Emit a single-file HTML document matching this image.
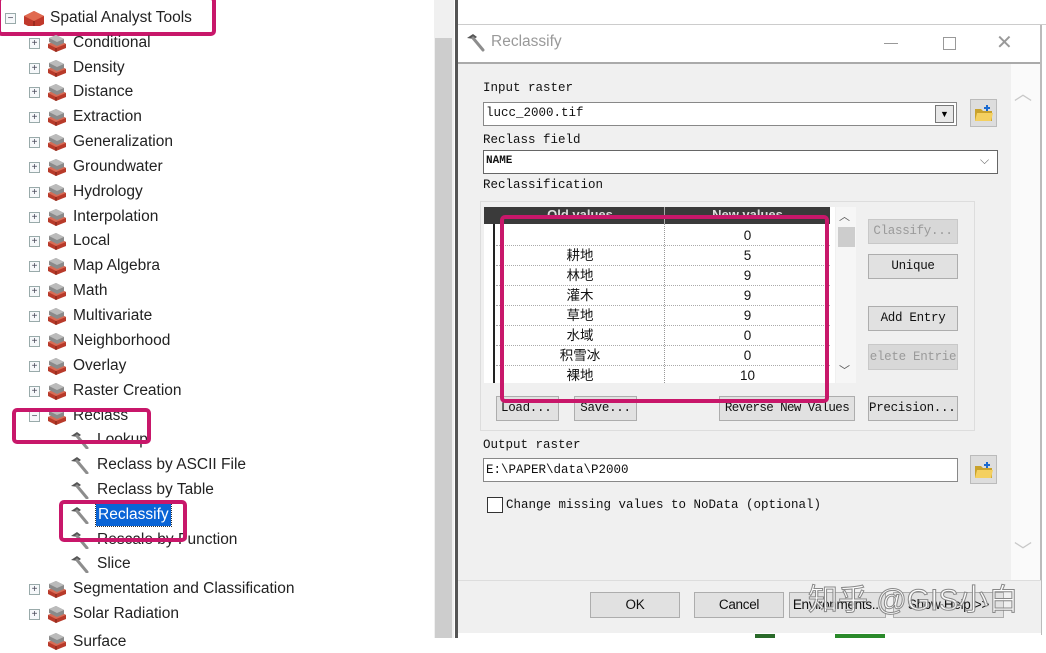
<!DOCTYPE html>
<html><head><meta charset="utf-8"><style>
*{margin:0;padding:0;box-sizing:border-box}
body{width:1046px;height:638px;overflow:hidden;background:#fff;position:relative;font-family:"Liberation Sans","Noto Sans CJK SC",sans-serif}
.a{position:absolute}
.row{position:absolute;height:22px;font-size:15.5px;color:#222;line-height:22px;white-space:nowrap}
.pb{position:absolute;width:11px;height:11px;border:1px solid #9aa;background:#f6f8fa;font-size:10px;line-height:9px;text-align:center;color:#445}
.ts{position:absolute;width:22px;height:18px}
.mono{font-family:"Liberation Mono","Noto Serif CJK SC",monospace;font-size:12.5px;color:#111}
.btn{position:absolute;background:#e1e1e1;border:1px solid #adadad;font-family:"Liberation Mono",monospace;font-size:12.5px;text-align:center;color:#111;overflow:hidden;white-space:nowrap;letter-spacing:-0.3px}
.dis{color:#9a9a9a;background:#d8d8d8;border-color:#c8c8c8}
.mag{position:absolute;border:4px solid #c8176a;border-radius:5px}
.cell{position:absolute;height:20px;line-height:20px;text-align:center;font-size:13.5px;color:#111;border-bottom:1px dotted #aaa}
</style></head><body>
<svg width="0" height="0" style="position:absolute"><defs>
<g id="ts"><path d="M2 10 L12 6 L20 10 L20 14 L10 18 L2 14Z" fill="#b83a2a"/><path d="M2 10 L10 14 L20 10 L12 6Z" fill="#d76b55"/><path d="M3 4 L10 1 L18 5 L18 9 L11 12 L3 8Z" fill="#8a8a8a"/><path d="M3 4 L11 8 L18 5 L10 1Z" fill="#bbb"/><path d="M10 14 L10 18" stroke="#7a2215" stroke-width="1"/></g>
<g id="hm"><path d="M1 5 L7 1 L11 4 L8 6Z" fill="#555"/><path d="M7 5 L17 17" stroke="#8d8d8d" stroke-width="3" stroke-linecap="round"/></g>
</defs></svg>

<div class="a" style="left:434px;top:0;width:20px;height:638px;background:#f0f0f0"></div>
<div class="a" style="left:435px;top:38px;width:17px;height:600px;background:#cdcdcd"></div>
<div class="a" style="left:455px;top:0;width:3px;height:638px;background:#555"></div>

<div class="pb" style="left:5px;top:13px">−</div>
<svg class="ts" style="left:22px;top:8px" width="24" height="22"><path d="M2 8 L12 3 L22 8 L22 16 L12 21 L2 16Z" fill="#c0392b"/><path d="M2 8 L12 13 L22 8 L12 3Z" fill="#e06a50"/><path d="M12 13 L12 21" stroke="#7a1d10"/></svg>
<div class="row" style="left:50px;top:7px">Spatial Analyst Tools</div>
<div class="mag" style="left:-3px;top:-4px;width:219px;height:40px"></div>

<div class="pb" style="left:29px;top:38px">+</div><svg class="ts" style="left:46px;top:34px"><use href="#ts"/></svg><div class="row" style="left:73px;top:32px">Conditional</div>
<div class="pb" style="left:29px;top:63px">+</div><svg class="ts" style="left:46px;top:59px"><use href="#ts"/></svg><div class="row" style="left:73px;top:57px">Density</div>
<div class="pb" style="left:29px;top:87px">+</div><svg class="ts" style="left:46px;top:83px"><use href="#ts"/></svg><div class="row" style="left:73px;top:81px">Distance</div>
<div class="pb" style="left:29px;top:112px">+</div><svg class="ts" style="left:46px;top:108px"><use href="#ts"/></svg><div class="row" style="left:73px;top:106px">Extraction</div>
<div class="pb" style="left:29px;top:137px">+</div><svg class="ts" style="left:46px;top:133px"><use href="#ts"/></svg><div class="row" style="left:73px;top:131px">Generalization</div>
<div class="pb" style="left:29px;top:162px">+</div><svg class="ts" style="left:46px;top:158px"><use href="#ts"/></svg><div class="row" style="left:73px;top:156px">Groundwater</div>
<div class="pb" style="left:29px;top:187px">+</div><svg class="ts" style="left:46px;top:183px"><use href="#ts"/></svg><div class="row" style="left:73px;top:181px">Hydrology</div>
<div class="pb" style="left:29px;top:212px">+</div><svg class="ts" style="left:46px;top:208px"><use href="#ts"/></svg><div class="row" style="left:73px;top:206px">Interpolation</div>
<div class="pb" style="left:29px;top:236px">+</div><svg class="ts" style="left:46px;top:232px"><use href="#ts"/></svg><div class="row" style="left:73px;top:230px">Local</div>
<div class="pb" style="left:29px;top:261px">+</div><svg class="ts" style="left:46px;top:257px"><use href="#ts"/></svg><div class="row" style="left:73px;top:255px">Map Algebra</div>
<div class="pb" style="left:29px;top:286px">+</div><svg class="ts" style="left:46px;top:282px"><use href="#ts"/></svg><div class="row" style="left:73px;top:280px">Math</div>
<div class="pb" style="left:29px;top:311px">+</div><svg class="ts" style="left:46px;top:307px"><use href="#ts"/></svg><div class="row" style="left:73px;top:305px">Multivariate</div>
<div class="pb" style="left:29px;top:336px">+</div><svg class="ts" style="left:46px;top:332px"><use href="#ts"/></svg><div class="row" style="left:73px;top:330px">Neighborhood</div>
<div class="pb" style="left:29px;top:361px">+</div><svg class="ts" style="left:46px;top:357px"><use href="#ts"/></svg><div class="row" style="left:73px;top:355px">Overlay</div>
<div class="pb" style="left:29px;top:386px">+</div><svg class="ts" style="left:46px;top:382px"><use href="#ts"/></svg><div class="row" style="left:73px;top:380px">Raster Creation</div>
<div class="pb" style="left:29px;top:411px">−</div><svg class="ts" style="left:46px;top:407px"><use href="#ts"/></svg><div class="row" style="left:73px;top:405px">Reclass</div>
<svg class="ts" style="left:70px;top:431px"><use href="#hm"/></svg><div class="row" style="left:97px;top:429px">Lookup</div>
<svg class="ts" style="left:70px;top:456px"><use href="#hm"/></svg><div class="row" style="left:97px;top:454px">Reclass by ASCII File</div>
<svg class="ts" style="left:70px;top:481px"><use href="#hm"/></svg><div class="row" style="left:97px;top:479px">Reclass by Table</div>
<svg class="ts" style="left:70px;top:506px"><use href="#hm"/></svg><div class="row" style="left:96px;top:504px;background:#0a64d6;color:#fff;padding:0 2px;outline:1px dotted #333">Reclassify</div>
<svg class="ts" style="left:70px;top:531px"><use href="#hm"/></svg><div class="row" style="left:97px;top:529px">Rescale by Function</div>
<svg class="ts" style="left:70px;top:555px"><use href="#hm"/></svg><div class="row" style="left:97px;top:553px">Slice</div>
<div class="pb" style="left:29px;top:584px">+</div><svg class="ts" style="left:46px;top:580px"><use href="#ts"/></svg><div class="row" style="left:73px;top:578px">Segmentation and Classification</div>
<div class="pb" style="left:29px;top:609px">+</div><svg class="ts" style="left:46px;top:605px"><use href="#ts"/></svg><div class="row" style="left:73px;top:603px">Solar Radiation</div>
<svg class="ts" style="left:46px;top:632px"><use href="#ts"/></svg><div class="row" style="left:73px;top:631px">Surface</div>
<div class="mag" style="left:12px;top:408px;width:139px;height:36px"></div>
<div class="mag" style="left:59px;top:500px;width:128px;height:42px"></div>

<div class="a" style="left:458px;top:24px;width:588px;height:1px;background:#ccc"></div>
<div class="a" style="left:458px;top:25px;width:583px;height:38px;background:#fff"></div>
<svg class="a" style="left:466px;top:33px" width="22" height="20"><use href="#hm"/></svg>
<div class="a" style="left:491px;top:33px;font-size:15.5px;color:#999">Reclassify</div>
<div class="a" style="left:884px;top:43px;width:14px;height:1px;background:#999"></div>
<div class="a" style="left:943px;top:37px;width:13px;height:13px;border:1px solid #999"></div>
<div class="a" style="left:996px;top:33px;font-size:20px;color:#999;line-height:20px">✕</div>
<div class="a" style="left:458px;top:62px;width:583px;height:2px;background:#aaa"></div>
<div class="a" style="left:458px;top:64px;width:553px;height:516px;background:#f0f0f0"></div>
<div class="a" style="left:1011px;top:64px;width:30px;height:516px;background:#fafafa"></div>
<div class="a" style="left:1014px;top:80px;color:#c8c8c8;font-size:18px">︿</div>
<div class="a" style="left:1014px;top:537px;color:#c8c8c8;font-size:18px">﹀</div>
<div class="a" style="left:1040px;top:25px;width:2px;height:610px;background:#bbb"></div>

<div class="a mono" style="left:483px;top:81px">Input raster</div>
<div class="a mono" style="left:483px;top:102px;width:474px;height:24px;background:#fff;border:1px solid #888;padding:3px 2px">lucc_2000.tif</div>
<div class="a" style="left:935px;top:105px;width:19px;height:18px;background:#e8e8e8;border:1px solid #777;font-size:9px;text-align:center;line-height:16px">▼</div>
<div class="a" style="left:970px;top:99px;width:27px;height:28px;background:#ddd;border:1px solid #bbb"></div>
<svg class="a" style="left:974px;top:104px" width="20" height="18"><path d="M1 5h6l2 2h9v10H1Z" fill="#c9a22c"/><path d="M3 9h16l-2 8H1Z" fill="#f4d060"/><path d="M13 1v6M10 4h6" stroke="#1a6ad0" stroke-width="2"/></svg>
<div class="a mono" style="left:483px;top:133px">Reclass field</div>
<div class="a mono" style="left:483px;top:150px;width:515px;height:24px;background:#fff;border:1px solid #666;padding:4px 2px;font-size:11px;font-weight:bold">NAME</div>
<div class="a" style="left:980px;top:153px;color:#666;font-size:12px">⌵</div>
<div class="a mono" style="left:483px;top:178px">Reclassification</div>

<div class="a" style="left:480px;top:201px;width:495px;height:230px;border:1px solid #ddd"></div>
<div class="a" style="left:484px;top:207px;width:351px;height:176px;background:#fff"></div>
<div class="a" style="left:484px;top:207px;width:346px;height:17px;background:#3a3a3a"></div>
<div class="a" style="left:484px;top:224px;width:11px;height:159px;background:#fff;border-right:2px solid #222"></div>
<div class="a" style="left:664px;top:207px;width:1px;height:17px;background:#aaa"></div>
<div class="a" style="left:496px;top:207px;width:168px;font-size:13px;color:#ddd;text-align:center;font-weight:bold">Old values</div>
<div class="a" style="left:665px;top:207px;width:165px;font-size:13px;color:#ddd;text-align:center;font-weight:bold">New values</div>
<div class="a" style="left:836px;top:207px;width:20px;height:176px;background:#f6f6f6"></div>
<div class="a" style="left:838px;top:227px;width:17px;height:20px;background:#cdcdcd"></div>
<div class="a" style="left:839px;top:208px;font-size:11px;color:#555">︿</div>
<div class="a" style="left:839px;top:362px;font-size:11px;color:#555">﹀</div>

<div class="cell" style="left:496px;top:226px;width:168px"></div><div class="cell" style="left:665px;top:226px;width:165px">0</div>
<div class="cell" style="left:496px;top:246px;width:168px">耕地</div><div class="cell" style="left:665px;top:246px;width:165px">5</div>
<div class="cell" style="left:496px;top:266px;width:168px">林地</div><div class="cell" style="left:665px;top:266px;width:165px">9</div>
<div class="cell" style="left:496px;top:286px;width:168px">灌木</div><div class="cell" style="left:665px;top:286px;width:165px">9</div>
<div class="cell" style="left:496px;top:306px;width:168px">草地</div><div class="cell" style="left:665px;top:306px;width:165px">9</div>
<div class="cell" style="left:496px;top:326px;width:168px">水域</div><div class="cell" style="left:665px;top:326px;width:165px">0</div>
<div class="cell" style="left:496px;top:346px;width:168px">积雪冰</div><div class="cell" style="left:665px;top:346px;width:165px">0</div>
<div class="cell" style="left:496px;top:366px;width:168px;border:0">裸地</div><div class="cell" style="left:665px;top:366px;width:165px;border:0">10</div>
<div class="a" style="left:664px;top:224px;width:1px;height:159px;border-left:1px dotted #999"></div>

<div class="btn dis" style="left:868px;top:219px;width:90px;height:25px;line-height:23px">Classify...</div>
<div class="btn" style="left:868px;top:254px;width:90px;height:25px;line-height:23px">Unique</div>
<div class="btn" style="left:868px;top:306px;width:90px;height:25px;line-height:23px">Add Entry</div>
<div class="btn dis" style="left:868px;top:344px;width:90px;height:26px;line-height:24px">elete Entrie</div>
<div class="btn" style="left:496px;top:396px;width:63px;height:25px;line-height:23px;text-align:left;padding-left:4px">Load...</div>
<div class="btn" style="left:574px;top:396px;width:63px;height:25px;line-height:23px">Save...</div>
<div class="btn" style="left:719px;top:396px;width:136px;height:25px;line-height:23px;letter-spacing:-0.6px">Reverse New Values</div>
<div class="btn" style="left:868px;top:396px;width:90px;height:25px;line-height:23px;text-align:left">Precision...</div>
<div class="mag" style="left:500px;top:215px;width:329px;height:188px"></div>

<div class="a mono" style="left:483px;top:438px">Output raster</div>
<div class="a mono" style="left:483px;top:458px;width:475px;height:24px;background:#fff;border:1px solid #888;padding:4px 2px">E:\PAPER\data\P2000</div>
<div class="a" style="left:970px;top:455px;width:27px;height:29px;background:#ddd;border:1px solid #bbb"></div>
<svg class="a" style="left:974px;top:461px" width="20" height="18"><path d="M1 5h6l2 2h9v10H1Z" fill="#c9a22c"/><path d="M3 9h16l-2 8H1Z" fill="#f4d060"/><path d="M13 1v6M10 4h6" stroke="#1a6ad0" stroke-width="2"/></svg>
<div class="a" style="left:487px;top:497px;width:16px;height:16px;background:#fff;border:1px solid #333"></div>
<div class="a mono" style="left:506px;top:498px">Change missing values to NoData (optional)</div>

<div class="a" style="left:458px;top:580px;width:583px;height:1px;background:#ddd"></div>
<div class="a" style="left:458px;top:581px;width:583px;height:52px;background:#f0f0f0"></div>
<div class="btn" style="left:590px;top:592px;width:90px;height:26px;line-height:24px;font-family:'Liberation Sans';font-size:13.5px">OK</div>
<div class="btn" style="left:694px;top:592px;width:90px;height:26px;line-height:24px;font-family:'Liberation Sans';font-size:13.5px">Cancel</div>
<div class="btn" style="left:789px;top:592px;width:97px;height:26px;line-height:24px;font-family:'Liberation Sans';font-size:13.5px">Environments...</div>
<div class="btn" style="left:893px;top:592px;width:111px;height:26px;line-height:24px;font-family:'Liberation Sans';font-size:13.5px">Show Help &gt;&gt;</div>
<div class="a" style="left:458px;top:633px;width:583px;height:5px;background:#fff"></div>
<div class="a" style="left:755px;top:634px;width:20px;height:4px;background:#2a6a2a"></div>
<div class="a" style="left:835px;top:634px;width:50px;height:4px;background:#2a8a2a"></div>
<div class="a" style="left:808px;top:575px;font-size:30px;color:rgba(255,255,255,.85);-webkit-text-stroke:1px #888;white-space:nowrap">知乎 @GIS小白</div>
</body></html>
